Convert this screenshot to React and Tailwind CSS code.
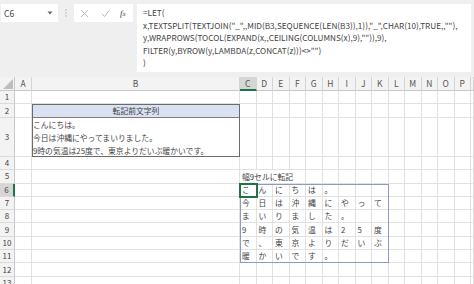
import React from "react";

const JP = { fontFamily: '"Noto Sans CJK JP", "Noto Sans", sans-serif' };

const COLS = ["A", "B", "C", "D", "E", "F", "G", "H", "I", "J", "K", "L", "M", "N", "O", "P", ""];
const ROW_H = ["13px", "14px", "39px", "13.3px", "13.3px", "13.3px", "13.3px", "13.3px", "13.3px", "13.3px", "13.3px", "13.3px", "13.3px"];

const BLOCK = [
  ["こ", "ん", "に", "ち", "は", "。", "", "", ""],
  ["今", "日", "は", "沖", "縄", "に", "や", "っ", "て"],
  ["ま", "い", "り", "ま", "し", "た", "。", "", ""],
  ["9", "時", "の", "気", "温", "は", "2", "5", "度"],
  ["で", "、", "東", "京", "よ", "り", "だ", "い", "ぶ"],
  ["暖", "か", "い", "で", "す", "。", "", "", ""],
];

const FORMULA = [
  "=LET(",
  'x,TEXTSPLIT(TEXTJOIN("_",,MID(B3,SEQUENCE(LEN(B3)),1)),"_",CHAR(10),TRUE,,""),',
  'y,WRAPROWS(TOCOL(EXPAND(x,,CEILING(COLUMNS(x),9),"")),9),',
  'FILTER(y,BYROW(y,LAMBDA(z,CONCAT(z)))<>"")',
  ")",
];

function TopBar() {
  return (
    <div className="h-[77px] bg-[#efefef] flex items-start pt-[4px] pl-[1px]" style={JP}>
      <div className="w-[57px] h-[18px] bg-white flex items-center justify-between px-[3px]">
        <span className="text-[8.5px] text-[#444]">C6</span>
        <svg width="6" height="4" viewBox="0 0 6 4" className="mr-[2px]">
          <path d="M0.5 0.5 L3 3.5 L5.5 0.5 Z" fill="#666" />
        </svg>
      </div>
      <div className="w-[16px] h-[18px] flex items-center justify-center">
        <svg width="2" height="8" viewBox="0 0 2 8">
          <circle cx="1" cy="1" r="0.7" fill="#aaa" />
          <circle cx="1" cy="4" r="0.7" fill="#aaa" />
          <circle cx="1" cy="7" r="0.7" fill="#aaa" />
        </svg>
      </div>
      <div className="w-[59px] h-[18px] bg-white flex items-center">
        <svg width="9" height="9" viewBox="0 0 9 9" className="ml-[6px]">
          <path d="M1 1 L8 8 M8 1 L1 8" stroke="#b0b0b0" strokeWidth="0.9" />
        </svg>
        <svg width="9" height="9" viewBox="0 0 9 9" className="ml-[12px]">
          <path d="M1 5 L3.5 7.5 L8 1.5" stroke="#b0b0b0" strokeWidth="0.9" fill="none" />
        </svg>
        <span
          className="ml-[10px] text-[9px] italic text-[#444] leading-none"
          style={{ fontFamily: '"Liberation Serif", serif' }}
        >
          f<span className="text-[7px]">x</span>
        </span>
      </div>
      <div className="ml-[4px] w-[334px] h-[68px] bg-white pl-[6px] pt-[2px]">
        {FORMULA.map((l, i) => (
          <div key={i} className="text-[8.2px] leading-[12.5px] text-[#444] whitespace-nowrap">
            {l}
          </div>
        ))}
      </div>
    </div>
  );
}

function Sheet() {
  const cells = [];
  for (let r = 1; r <= 13; r++) {
    const isSel = r === 6;
    cells.push(
      <div
        key={"rh" + r}
        className={
          "flex items-center justify-center text-[8px] text-[#444] border-b border-[#dadada] " +
          (isSel
            ? "bg-[#d6d6d6] border-r-2 border-r-[#217346]"
            : "bg-[#f3f3f3] border-r border-r-[#c9c9c9]")
        }
        style={{ gridColumn: 1, gridRow: r + 1 }}
      >
        {r}
      </div>
    );
    for (let c = 0; c < COLS.length; c++) {
      if (c === 1 && (r === 2 || r === 3)) continue;
      if (c >= 2 && c <= 10 && r >= 6 && r <= 11) continue;
      if (r === 5 && c >= 2 && c <= 5) continue;
      cells.push(
        <div
          key={r + "-" + c}
          className="border-r border-b border-[#e1e1e1]"
          style={{ gridColumn: c + 2, gridRow: r + 1 }}
        />
      );
    }
  }

  return (
    <div
      className="grid bg-white"
      style={{
        ...JP,
        gridTemplateColumns: "15px 17px 208px repeat(14, 16.5px) 1fr",
        gridTemplateRows: "14px " + ROW_H.join(" "),
      }}
    >
      <div
        className="bg-[#f3f3f3] border-r border-b border-[#c9c9c9] flex items-end justify-end pr-[1px] pb-[1px]"
        style={{ gridColumn: 1, gridRow: 1 }}
      >
        <svg width="10" height="10" viewBox="0 0 10 10">
          <path d="M10 0 L10 10 L0 10 Z" fill="#bdbdbd" />
        </svg>
      </div>
      {COLS.map((l, i) => (
        <div
          key={"h" + i}
          className={
            "flex items-center justify-center text-[8.5px] text-[#555] border-r border-r-[#d4d4d4] " +
            (l === "C"
              ? "bg-[#d6d6d6] border-b-2 border-b-[#217346]"
              : "bg-[#f3f3f3] border-b border-b-[#c9c9c9]")
          }
          style={{ gridColumn: i + 2, gridRow: 1 }}
        >
          {l}
        </div>
      ))}
      {cells}
      <div
        className="border-r border-b border-[#e1e1e1] flex items-center pl-[2px] text-[7.8px] text-[#444] whitespace-nowrap"
        style={{ gridColumn: "4 / span 4", gridRow: 6 }}
      >
        幅9セルに転記
      </div>
      <div
        className="flex flex-col outline outline-1 outline-[#6b6b6b] -outline-offset-1 relative z-10"
        style={{ gridColumn: 3, gridRow: "3 / span 2" }}
      >
        <div className="h-[14px] bg-[#d9e1f2] border-b border-[#7f7f7f] flex items-center justify-center text-[7.8px] text-[#444]">
          転記前文字列
        </div>
        <div className="flex-1 flex flex-col justify-end pl-[1px] text-[7.8px] leading-[13px] text-[#444]">
          <div>こんにちは。</div>
          <div>今日は沖縄にやってまいりました。</div>
          <div>9時の気温は25度で、東京よりだいぶ暖かいです。</div>
        </div>
      </div>
      <div
        className="grid outline outline-1 outline-[#8d9cbd] -outline-offset-1 relative z-10"
        style={{
          gridColumn: "4 / span 9",
          gridRow: "7 / span 6",
          gridTemplateColumns: "repeat(9, 16.5px)",
          gridTemplateRows: "repeat(6, 13.3px)",
        }}
      >
        {BLOCK.map((row, ri) =>
          row.map((ch, ci) => (
            <div
              key={ri + "-" + ci}
              className={
                "border-r border-b border-[#e1e1e1] flex items-center pl-[2px] text-[7.8px] text-[#444] " +
                (ri === 0 && ci === 0
                  ? "outline outline-2 outline-[#217346] -outline-offset-1 relative z-20"
                  : "")
              }
            >
              {ch}
            </div>
          ))
        )}
      </div>
    </div>
  );
}

export default function App() {
  return (
    <div className="w-[474px] h-[284px] overflow-hidden bg-white">
      <TopBar />
      <Sheet />
    </div>
  );
}
